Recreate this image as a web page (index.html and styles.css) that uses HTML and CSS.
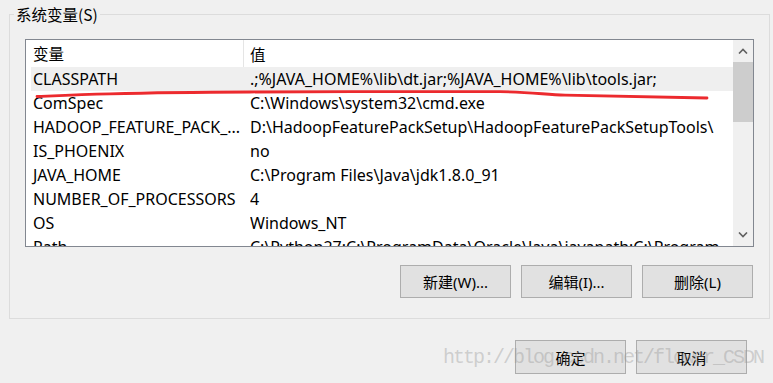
FILE: index.html
```html
<!DOCTYPE html>
<html>
<head>
<meta charset="utf-8">
<link rel="stylesheet" href="styles.css">
</head>
<body>
<div class="dialog">
  <div class="group">
    <span class="legend">系统变量(S)</span>
    <div class="list">
      <div class="list-main">
        <div class="header">
          <div class="c1">变量</div>
          <div class="c2">值</div>
        </div>
        <div class="rows">
          <div class="row sel"><div class="c1">CLASSPATH</div><div class="c2">.;%JAVA_HOME%\lib\dt.jar;%JAVA_HOME%\lib\tools.jar;</div></div>
          <div class="row"><div class="c1">ComSpec</div><div class="c2">C:\Windows\system32\cmd.exe</div></div>
          <div class="row"><div class="c1">HADOOP_FEATURE_PACK_...</div><div class="c2">D:\HadoopFeaturePackSetup\HadoopFeaturePackSetupTools\</div></div>
          <div class="row"><div class="c1">IS_PHOENIX</div><div class="c2">no</div></div>
          <div class="row"><div class="c1">JAVA_HOME</div><div class="c2">C:\Program Files\Java\jdk1.8.0_91</div></div>
          <div class="row"><div class="c1">NUMBER_OF_PROCESSORS</div><div class="c2">4</div></div>
          <div class="row"><div class="c1">OS</div><div class="c2">Windows_NT</div></div>
          <div class="row"><div class="c1">Path</div><div class="c2">C:\Python27;C:\ProgramData\Oracle\Java\javapath;C:\Program</div></div>
        </div>
      </div>
      <div class="scrollbar">
        <div class="arrow">
          <svg width="10" height="6" viewBox="0 0 10 6"><path d="M1 5.5 L5 1.5 L9 5.5" fill="none" stroke="#606060" stroke-width="1.6"/></svg>
        </div>
        <div class="thumb"></div>
        <div class="track"></div>
        <div class="arrow">
          <svg width="10" height="6" viewBox="0 0 10 6"><path d="M1 0.5 L5 4.5 L9 0.5" fill="none" stroke="#606060" stroke-width="1.6"/></svg>
        </div>
      </div>
    </div>
    <div class="btn-row">
      <button class="btn">新建(W)...</button>
      <button class="btn">编辑(I)...</button>
      <button class="btn">删除(L)</button>
    </div>
  </div>
  <div class="footer">
    <button class="btn btn-lg">确定</button>
    <button class="btn btn-lg">取消</button>
  </div>
  <svg class="redline" width="773" height="383" viewBox="0 0 773 383">
    <path d="M37 96.5 C60 95.5 80 94.5 110 93.8 C150 92.8 200 92.2 250 92 C330 91.5 430 91.2 500 91.6 C530 92 545 94.5 565 95.2 C600 96.3 650 97.2 707 98" fill="none" stroke="#ec2a2e" stroke-width="2.8" stroke-linecap="round"/>
  </svg>
  <div class="watermark">http://blog.csdn.net/flower_CSDN</div>
</div>
</body>
</html>
```
FILE: styles.css
```css
html, body {
  margin: 0;
  padding: 0;
  background: #f0f0f0;
}
body {
  width: 773px;
  height: 383px;
  overflow: hidden;
  font-family: "Noto Sans", "Noto Sans CJK SC", sans-serif;
  font-size: 16px;
  color: #000;
}
.dialog {
  position: relative;
  width: 773px;
  height: 383px;
  padding-top: 14px;
  box-sizing: border-box;
}
.group {
  position: relative;
  margin: 0 3px 0 9px;
  height: 305px;
  box-sizing: border-box;
  border: 1px solid #dcdcdc;
  padding: 24px 15px 0 15px;
}
.legend {
  position: absolute;
  left: 4px;
  top: -12px;
  padding: 0 2px;
  background: #f0f0f0;
  line-height: 22px;
  font-size: 15.5px;
  font-family: "Noto Sans CJK SC", sans-serif;
}
.list {
  display: flex;
  width: 729px;
  height: 208px;
  box-sizing: border-box;
  border: 1px solid #828790;
  background: #fff;
}
.list-main {
  flex: 1;
  overflow: hidden;
}
.header {
  display: flex;
  height: 27px;
  align-items: center;
  padding-left: 7px;
}
.header .c1 {
  width: 210px;
  height: 27px;
  line-height: 27px;
  border-right: 1px solid #e5e5e5;
  font-family: "Noto Sans CJK SC", sans-serif;
  font-size: 15.5px;
}
.header .c2 {
  padding-left: 6px;
  font-family: "Noto Sans CJK SC", sans-serif;
  font-size: 15.5px;
}
.rows {
  padding-left: 5px;
}
.row {
  display: flex;
  height: 24px;
  line-height: 24px;
  padding-left: 2px;
  white-space: nowrap;
}
.row.sel {
  background: #efefef;
}
.row .c1 {
  width: 217px;
  flex: none;
}
.row .c2 {
  flex: 1;
  overflow: hidden;
}
.scrollbar {
  width: 20px;
  flex: none;
  display: flex;
  flex-direction: column;
  background: #f0f0f0;
}
.arrow {
  height: 22px;
  display: flex;
  align-items: center;
  justify-content: center;
}
.thumb {
  height: 60px;
  background: #cdcdcd;
}
.track {
  flex: 1;
}
.btn-row {
  display: flex;
  justify-content: flex-end;
  gap: 10px;
  margin-top: 18px;
  padding-right: 1px;
}
.btn {
  width: 111px;
  height: 33px;
  margin: 0;
  padding: 0;
  border: 1px solid #adadad;
  background: #e1e1e1;
  font-family: "Noto Sans", "Noto Sans CJK SC", sans-serif;
  font-size: 15px;
  color: #000;
}
.footer {
  display: flex;
  justify-content: flex-end;
  gap: 10px;
  margin-top: 21px;
  padding-right: 26px;
}
.btn-lg {
  height: 34px;
}
.redline {
  position: absolute;
  left: 0;
  top: 0;
  pointer-events: none;
}
.watermark {
  position: absolute;
  left: 443px;
  top: 346px;
  font-family: "Liberation Mono", monospace;
  font-size: 20px;
  letter-spacing: -2px;
  line-height: 24px;
  color: rgba(150, 150, 150, 0.4);
  white-space: nowrap;
}
```
